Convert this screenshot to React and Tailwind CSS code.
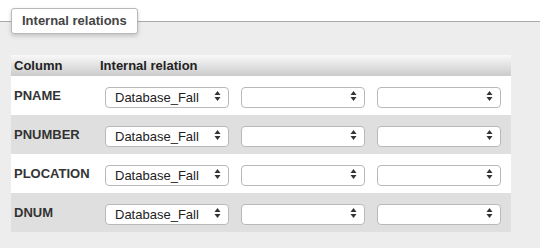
import React from "react";

function Arrows() {
  return (
    <svg width="7" height="11" viewBox="0 0 7 11" className="pointer-events-none absolute right-[8px] top-1/2 -translate-y-1/2">
      <path d="M3.5 0.5 L6.5 4.5 L0.5 4.5 Z" fill="#333" />
      <path d="M3.5 10.5 L6.5 6.5 L0.5 6.5 Z" fill="#333" />
    </svg>
  );
}

function Sel({ value }) {
  return (
    <div className="relative w-[124px] h-[21px]">
      <select
        defaultValue={value}
        className="appearance-none w-full h-full rounded-[4px] border border-[#b9b9b9] bg-white pl-[9px] text-[13px] leading-[19px] text-[#222] outline-none"
        style={{ fontFamily: '"Liberation Sans", Arial, sans-serif' }}
      >
        <option value={value}>{value}</option>
      </select>
      <Arrows />
    </div>
  );
}

const rows = ["PNAME", "PNUMBER", "PLOCATION", "DNUM"];

export default function App() {
  return (
    <div
      className="w-[540px] h-[248px] bg-white overflow-hidden"
      style={{ fontFamily: '"Liberation Sans", Arial, Helvetica, sans-serif' }}
    >
      <fieldset className="mt-[8px] h-[240px] border-t border-[#aaaaaa] bg-[#ededed] px-0">
        <legend className="ml-[11px] h-[26px] w-[127px] rounded-[3px] border border-[#b8b8b8] bg-white pl-[10px] text-[13px] font-bold leading-[24px] text-[#444] shadow-[0_2px_4px_rgba(0,0,0,0.18)]">
          Internal relations
        </legend>
        <div className="ml-[11px] mt-[21px] w-[500px]">
          <div className="grid grid-cols-[89px_1fr] h-[21px] items-center bg-gradient-to-b from-[#f9f9f9] to-[#cbcbcb] text-[13px] font-bold text-[#222]">
            <div className="pl-[3px]">Column</div>
            <div>Internal relation</div>
          </div>
          {rows.map((r, i) => (
            <div
              key={r}
              className={
                "grid grid-cols-[89px_136px_136px_139px] h-[39px] items-center " +
                (i % 2 === 0 ? "bg-white" : "bg-[#dfdfdf]")
              }
            >
              <div className="pl-[3px] text-[13px] font-bold text-[#333]">{r}</div>
              <div className="pl-[5px]"><Sel value="Database_Fall" /></div>
              <div className="pl-[5px]"><Sel value="" /></div>
              <div className="pl-[5px]"><Sel value="" /></div>
            </div>
          ))}
        </div>
      </fieldset>
    </div>
  );
}
